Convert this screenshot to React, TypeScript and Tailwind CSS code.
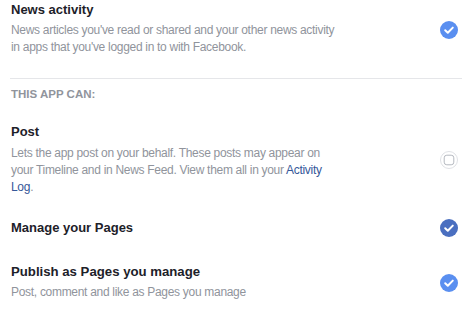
import React from "react";

const Check = ({ dark }: { dark?: boolean }) => (
  <svg width="18" height="18" viewBox="0 0 18 18">
    <circle cx="9" cy="9" r="9" fill={dark ? "#4a6fc0" : "#5a8ff0"} />
    <path d="M5.2 9.3 L7.8 11.8 L12.8 6.6" fill="none" stroke="#fff" strokeWidth="2" strokeLinecap="round" strokeLinejoin="round" />
  </svg>
);

const Empty = () => (
  <svg width="18" height="18" viewBox="0 0 18 18">
    <circle cx="9" cy="9" r="8.5" fill="#fff" stroke="#dfe1e5" strokeWidth="1" />
    <rect x="4.2" y="4.2" width="9.6" height="9.6" rx="2.6" fill="#fff" stroke="#b4b8bf" strokeWidth="1" />
  </svg>
);

export default function App() {
  const font = { fontFamily: '"Liberation Sans", Arial, Helvetica, sans-serif' };
  return (
    <div className="w-[470px] h-[319px] bg-white overflow-hidden pl-[11px] pr-[12px]" style={font}>
      <div className="flex items-center">
        <div className="flex-1">
          <div className="text-[13px] leading-[19px] font-bold text-[#1d2129]">News activity</div>
          <div className="mt-[3px] text-[12px] leading-[17px] tracking-[-0.3px] text-[#90949c] w-[328px]">
            News articles you've read or shared and your other news activity in apps that you've logged in to with Facebook.
          </div>
        </div>
        <div className="mt-[3px]"><Check /></div>
      </div>
      <div className="mt-[22px] h-px bg-[#e5e6e9] -ml-px mr-[-4px]" />
      <div className="mt-[7px] text-[11.5px] leading-[16px] font-bold text-[#90949c]">THIS APP CAN:</div>
      <div className="mt-[20px] flex items-center">
        <div className="flex-1">
          <div className="text-[13px] leading-[19px] font-bold text-[#1d2129]">Post</div>
          <div className="mt-[4px] text-[12px] leading-[17px] tracking-[-0.3px] text-[#90949c] w-[322px]">
            Lets the app post on your behalf. These posts may appear on your Timeline and in News Feed. View them all in your <span className="text-[#365899]">Activity Log</span>.
          </div>
        </div>
        <div className="mt-[1px]"><Empty /></div>
      </div>
      <div className="mt-[21px] flex items-center">
        <div className="flex-1 text-[13px] leading-[19px] font-bold text-[#1d2129]">Manage your Pages</div>
        <div className="mt-[2px]"><Check dark /></div>
      </div>
      <div className="mt-[25px] flex items-center">
        <div className="flex-1">
          <div className="text-[13.2px] leading-[19px] font-bold text-[#1d2129]">Publish as Pages you manage</div>
          <div className="mt-[3px] text-[12px] leading-[17px] tracking-[-0.3px] text-[#90949c]">Post, comment and like as Pages you manage</div>
        </div>
        <div className="mt-[3px]"><Check /></div>
      </div>
    </div>
  );
}
